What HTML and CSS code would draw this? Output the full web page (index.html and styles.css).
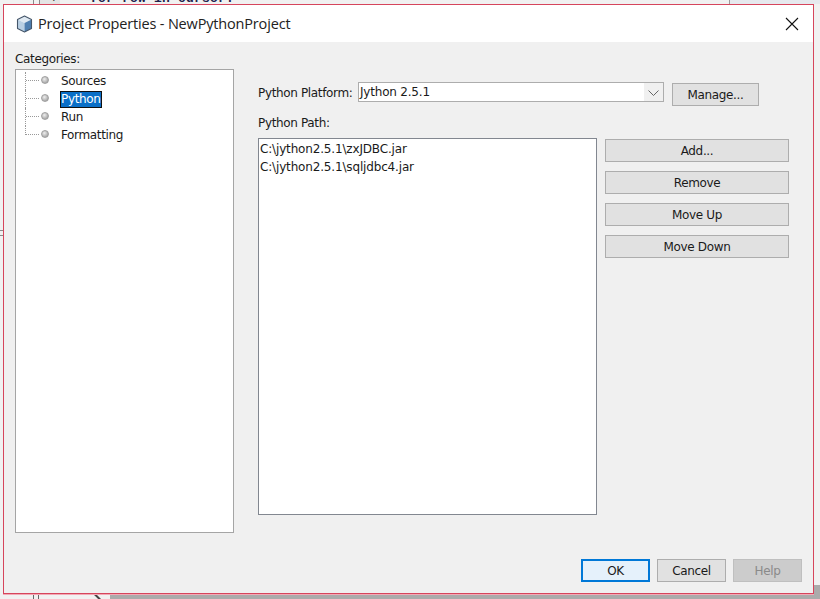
FILE: index.html
```html
<!DOCTYPE html>
<html lang="en">
<head>
<meta charset="utf-8">
<title>Project Properties - NewPythonProject</title>
<link rel="stylesheet" href="styles.css">
</head>
<body>
<div class="backdrop" aria-hidden="true">
  <div class="bg-rail"></div>
  <div class="bg-gutter">7</div>
  <div class="bg-code">for row in cursor:</div>
  <div class="bg-divider"></div>
  <div class="bg-tint"></div>
  <div class="bg-tick"></div>
  <div class="bg-bottom"></div>
  <div class="bg-corner"></div>
  <div class="bg-bottom-rail"></div>
  <div class="bg-slash"></div>
</div>
<div class="dialog">
  <header class="titlebar">
    <svg class="app-icon" width="17" height="18" viewBox="0 0 17 18">
      <path d="M8.5 1 15.5 4.5 8.5 8 1.5 4.5Z" fill="#dfe9f2"/>
      <path d="M8.5 8V17L1.5 13.5V4.5Z" fill="#b9d0e4"/>
      <path d="M8.5 8 15.5 4.5V13.5L8.5 17Z" fill="#4f7fb0"/>
      <path d="M8.5 1 15.5 4.5V13.5L8.5 17 1.5 13.5V4.5Z" fill="none" stroke="#45566a" stroke-width="1.1" stroke-linejoin="round"/>
    </svg>
    <span class="title">Project Properties - NewPythonProject</span>
    <svg class="close" width="14" height="14" viewBox="0 0 14 14">
      <path d="M1 1 13 13M13 1 1 13" stroke="#111" stroke-width="1.1" fill="none"/>
    </svg>
  </header>
  <div class="content">
    <div class="main">
      <section class="categories">
        <div class="cat-label">Categories:</div>
        <ul class="tree">
          <li class="node"><span class="dots"></span><span class="bullet"></span><span class="node-text">Sources</span></li>
          <li class="node"><span class="dots"></span><span class="bullet"></span><span class="node-text selected">Python</span></li>
          <li class="node"><span class="dots"></span><span class="bullet"></span><span class="node-text">Run</span></li>
          <li class="node"><span class="dots last"></span><span class="bullet"></span><span class="node-text">Formatting</span></li>
        </ul>
      </section>
      <section class="panel">
        <div class="platform-row">
          <span class="field-label">Python Platform:</span>
          <div class="combo">
            <span class="combo-value">Jython 2.5.1</span>
            <span class="combo-arrow">
              <svg width="11" height="6" viewBox="0 0 11 6"><path d="M.5.5 5.5 5.5 10.5.5" stroke="#666" fill="none"/></svg>
            </span>
          </div>
          <button class="btn manage">Manage...</button>
        </div>
        <div class="path-label">Python Path:</div>
        <div class="path-row">
          <div class="path-list">
            <div class="path-item">C:\jython2.5.1\zxJDBC.jar</div>
            <div class="path-item">C:\jython2.5.1\sqljdbc4.jar</div>
          </div>
          <div class="path-actions">
            <button class="btn wide">Add...</button>
            <button class="btn wide">Remove</button>
            <button class="btn wide">Move Up</button>
            <button class="btn wide">Move Down</button>
          </div>
        </div>
      </section>
    </div>
    <footer class="footer">
      <button class="btn foot primary">OK</button>
      <button class="btn foot">Cancel</button>
      <button class="btn foot disabled">Help</button>
    </footer>
  </div>
</div>
</body>
</html>
```
FILE: styles.css
```css
* { box-sizing: border-box; }
html, body { margin: 0; padding: 0; }
body {
  width: 820px;
  height: 599px;
  overflow: hidden;
  position: relative;
  background: #f1f1f1;
  padding: 4px 6px 5px 3px;
  font-family: "DejaVu Sans", Tahoma, sans-serif;
  font-size: 12px;
  color: #1a1a1a;
}
.backdrop { position: absolute; inset: 0; overflow: hidden; }
.bg-rail { position: absolute; left: 33px; top: 0; width: 6px; height: 4px; border-left: 1px solid #8a8a8a; }
.bg-gutter { position: absolute; left: 39px; top: -8px; width: 21px; height: 12px; padding-left: 11px; background: #e4e4e4; border-left: 1px solid #8a8a8a; font-size: 11px; line-height: 12px; color: #333; overflow: hidden; }
.bg-code { position: absolute; left: 90px; top: -8px; font: 700 13px/14px "Liberation Mono", monospace; color: #22224a; white-space: nowrap; letter-spacing: .2px; }
.bg-divider { position: absolute; left: 729px; top: 0; width: 1px; height: 4px; background: #9a9a9a; }
.bg-tint { position: absolute; left: 730px; right: 0; top: 0; height: 4px; background: #e6e9ee; }
.bg-tick { position: absolute; left: 0; top: 230px; width: 3px; height: 6px; border-top: 1px solid #8a8a8a; border-bottom: 1px solid #8a8a8a; }
.bg-bottom { position: absolute; left: 110px; right: 0; top: 594px; height: 5px; background: #ababab; }
.bg-corner { position: absolute; left: 814px; right: 0; top: 585px; height: 10px; background: #ababab; }
.bg-bottom-rail { position: absolute; left: 33px; top: 594px; width: 6px; height: 5px; border-left: 1px solid #666; border-right: 1px solid #666; }
.bg-slash { position: absolute; left: 95px; top: 593px; width: 9px; height: 2px; background: #444; transform: rotate(45deg); transform-origin: left top; }

.dialog {
  position: relative;
  width: 811px;
  height: 590px;
  border: 1px solid #d6455c;
  background: #f0f0f0;
  display: flex;
  flex-direction: column;
  box-shadow: 0 1px 0 #f3a9b5;
}
.titlebar {
  height: 37px;
  flex: none;
  background: #fff;
  display: flex;
  align-items: center;
  padding: 0 14px 0 12px;
}
.app-icon { flex: none; margin-right: 5px; }
.title {
  flex: 1;
  font: 14.5px/20px "Open Sans", "Noto Sans", sans-serif;
  color: #222;
  letter-spacing: -.17px;
}
.close { flex: none; }
.content { flex: 1; min-height: 0; display: flex; flex-direction: column; padding: 0 11px 11px 11px; }
.main { flex: 1; min-height: 0; display: flex; }

.categories { width: 219px; flex: none; display: flex; flex-direction: column; padding-top: 10px; }
.cat-label { height: 17px; line-height: 15px; letter-spacing: -.35px; }
.tree {
  list-style: none;
  margin: 0;
  padding: 2px 0 0 9px;
  width: 219px;
  height: 464px;
  background: #fff;
  border: 1px solid #a5a5a5;
}
.node { position: relative; height: 18px; display: flex; align-items: center; }
.dots {
  width: 14px;
  height: 18px;
  flex: none;
  position: relative;
  border-left: 1px dotted #999;
  margin-top: -1px;
}
.dots::after { content: ""; position: absolute; left: 0; top: 8px; width: 13px; border-top: 1px dotted #999; }
.dots.last { height: 9px; margin-top: -9px; }
.bullet {
  width: 8px;
  height: 8px;
  flex: none;
  margin: -3px 0 0 2px;
  border-radius: 50%;
  background: radial-gradient(circle at 40% 35%, #eeeeee, #a8a8a8 75%);
  border: 1px solid #a0a0a0;
}
.node-text { margin-left: 11px; padding: 0 1px; line-height: 16px; letter-spacing: -.35px; }
.selected { background: #0a6fc7; color: #fff; outline: 1px solid #111; outline-offset: -1px; height: 17px; }

.panel { flex: 1; min-width: 0; padding: 41px 0 0 24px; display: flex; flex-direction: column; }
.platform-row { display: flex; align-items: flex-start; height: 25px; }
.field-label { width: 100px; flex: none; padding-top: 3px; line-height: 15px; letter-spacing: -.35px; }
.combo {
  width: 306px;
  height: 20px;
  flex: none;
  margin-top: -1px;
  background: #fff;
  border: 1px solid #adadad;
  display: flex;
  padding-left: 1px;
}
.combo-value { flex: 1; line-height: 19px; letter-spacing: -.2px; }
.combo-arrow { width: 19px; flex: none; background: #f0f0f0; display: flex; align-items: center; justify-content: center; padding-top: 1px; }
.btn {
  font: inherit;
  color: #1a1a1a;
  background: #e1e1e1;
  border: 1px solid #adadad;
  padding: 0;
  height: 23px;
  letter-spacing: -.35px;
}
.manage { width: 87px; margin-left: 8px; }
.path-label { margin-top: 8px; height: 22px; line-height: 15px; letter-spacing: -.35px; }
.path-row { display: flex; align-items: flex-start; gap: 8px; }
.path-list {
  width: 339px;
  height: 377px;
  flex: none;
  background: #fff;
  border: 1px solid #828790;
  padding-top: 1px;
}
.path-item { height: 18px; line-height: 18px; padding-left: 1px; letter-spacing: -.16px; }
.path-actions { display: flex; flex-direction: column; gap: 9px; padding-top: 1px; width: 184px; flex: none; }
.wide { width: 184px; }
.footer { flex: none; display: flex; justify-content: flex-end; gap: 7px; height: 23px; }
.foot { width: 69px; }
.primary { background: #e5f1fb; border: 2px solid #0078d7; }
.disabled { background: #cccccc; border-color: #bfbfbf; color: #8a8a8a; }
```
